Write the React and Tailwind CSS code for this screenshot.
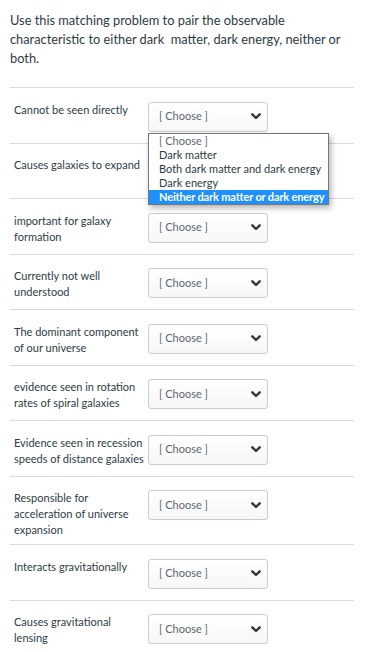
const rows = [
  ["Cannot be seen directly"],
  ["Causes galaxies to expand"],
  ["important for galaxy", "formation"],
  ["Currently not well", "understood"],
  ["The dominant component", "of our universe"],
  ["evidence seen in rotation", "rates of spiral galaxies"],
  ["Evidence seen in recession", "speeds of distance galaxies"],
  ["Responsible for", "acceleration of universe", "expansion"],
  ["Interacts gravitationally"],
  ["Causes gravitational", "lensing"],
]

const options = [
  "[ Choose ]",
  "Dark matter",
  "Both dark matter and dark energy",
  "Dark energy",
  "Neither dark matter or dark energy",
]

function Chevron() {
  return (
    <svg width="10" height="7" viewBox="0 0 10 7" className="shrink-0">
      <polyline points="1.3,1.3 5,5 8.7,1.3" fill="none" stroke="#2d3b45" strokeWidth="2.4" strokeLinecap="round" strokeLinejoin="round" />
    </svg>
  )
}

function FakeSelect({ hidden }) {
  return (
    <div
      className={
        hidden
          ? "invisible flex h-[30px] w-[120px] shrink-0 items-center justify-between rounded-[3px] border border-[#c7cdd1] pl-[10px] pr-[6px]"
          : "flex h-[30px] w-[120px] shrink-0 items-center justify-between rounded-[3px] border border-[#c7cdd1] bg-gradient-to-b from-white to-[#f7f7f7] pl-[10px] pr-[6px]"
      }
    >
      <span className="text-[11px] text-[#5b6770]">[ Choose ]</span>
      <Chevron />
    </div>
  )
}

function Dropdown() {
  return (
    <div className="absolute left-0 top-[31px] z-10 w-[181px] border border-[#767676] bg-white shadow-[2px_3px_6px_rgba(0,0,0,0.3)]">
      {options.map((opt, i) => (
        <div
          key={opt}
          className={
            i === 4
              ? "h-[14.2px] whitespace-nowrap bg-[#1e90ff] pl-[10px] text-[11px] font-bold leading-[14.2px] tracking-[-0.15px] text-white"
              : i === 0
              ? "h-[14.2px] whitespace-nowrap pl-[10px] text-[11px] leading-[14.2px] text-[#5b6770]"
              : "h-[14.2px] whitespace-nowrap pl-[10px] text-[11px] leading-[14.2px] text-[#2d3b45]"
          }
        >
          {opt}
        </div>
      ))}
    </div>
  )
}

export default function App() {
  return (
    <div className="min-h-[652px] w-[370px] bg-white px-[10px] pt-[11px] font-['Lato','Liberation_Sans',sans-serif] text-[#2d3b45]">
      <p className="w-[345px] text-[12.8px] leading-[19px]">
        Use this matching problem to pair the observable characteristic to either dark&nbsp; matter, dark energy, neither or both.
      </p>
      <div className="mt-[19px] w-[344px]">
        {rows.map((lines, i) => (
          <div key={i} className="flex border-t border-[#d9dcde] pb-[6px] pl-[4px] pt-[13.5px]">
            <div className="w-[134px] shrink-0 text-[11px] leading-[16px]">
              {lines.map((l) => (
                <div key={l} className="whitespace-nowrap">{l}</div>
              ))}
            </div>
            <div className="relative mb-[5px]">
              {/* row 2's select sits under the open list */}
              <FakeSelect hidden={i === 1} />
              {i === 0 && <Dropdown />}
            </div>
          </div>
        ))}
      </div>
    </div>
  )
}
